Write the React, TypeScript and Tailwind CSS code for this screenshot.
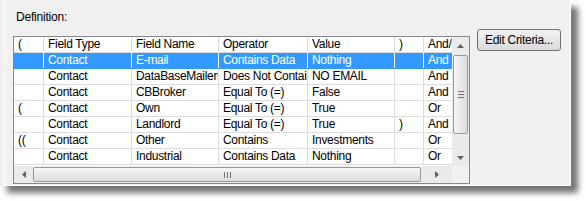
import React from "react"

const FONT = { fontFamily: '"Liberation Sans", Arial, sans-serif' }

// column widths, last one has no right gridline (scrollbar sits beside it)
const COL_W = ["w-[30px]", "w-[88px]", "w-[87px]", "w-[89px]", "w-[87px]", "w-[29px]", "w-[28px]"]

const HEADER = ["(", "Field Type", "Field Name", "Operator", "Value", ")", "And/Or"]

const ROWS: string[][] = [
  ["", "Contact", "E-mail", "Contains Data", "Nothing", "", "And"],
  ["", "Contact", "DataBaseMailerOptOut", "Does Not Contain", "NO EMAIL", "", "And"],
  ["", "Contact", "CBBroker", "Equal To (=)", "False", "", "And"],
  ["(", "Contact", "Own", "Equal To (=)", "True", "", "Or"],
  ["", "Contact", "Landlord", "Equal To (=)", "True", ")", "And"],
  ["((", "Contact", "Other", "Contains", "Investments", "", "Or"],
  ["", "Contact", "Industrial", "Contains Data", "Nothing", "", "Or"],
]

function Arrow({ dir }: { dir: "up" | "down" | "left" | "right" }) {
  const pts = {
    up: "0,4 7,4 3.5,0",
    down: "0,0 7,0 3.5,4",
    left: "4,0 4,7 0,3.5",
    right: "0,0 0,7 4,3.5",
  }[dir]
  const vert = dir === "up" || dir === "down"
  return (
    <svg width={vert ? 7 : 4} height={vert ? 4 : 7} viewBox={vert ? "0 0 7 4" : "0 0 4 7"}>
      <polygon points={pts} fill="#606060" />
    </svg>
  )
}

function Row({ cells, header, selected }: { cells: string[]; header?: boolean; selected?: boolean }) {
  return (
    <div
      className={
        "flex h-[16px] shrink-0 border-b " +
        (selected ? "border-[#3399ff] bg-[#3399ff] text-white" : "border-[#dcdcdc] text-black") +
        (header ? " bg-white" : "")
      }
    >
      {cells.map((c, i) => (
        <div
          key={i}
          className={
            COL_W[i] +
            " shrink-0 overflow-hidden whitespace-nowrap pl-[4px] text-[12px] leading-[15px] tracking-[-0.3px] " +
            (i < cells.length - 1 ? (selected ? "border-r border-white" : "border-r border-[#dcdcdc]") : "")
          }
        >
          {c}
        </div>
      ))}
    </div>
  )
}

function Grid() {
  return (
    <div className="flex w-[457px] flex-col border border-[#828790] bg-white">
      <div className="flex h-[129px]">
        <div className="flex w-[438px] flex-col overflow-hidden">
          <Row cells={HEADER} header />
          {ROWS.map((r, i) => (
            <Row key={i} cells={r} selected={i === 0} />
          ))}
        </div>
        {/* vertical scrollbar */}
        <div className="flex w-[17px] flex-col items-center bg-[#eaeaea]">
          <div className="flex h-[17px] w-full items-center justify-center">
            <Arrow dir="up" />
          </div>
          <div className="mt-[1px] flex h-[79px] w-[15px] items-center justify-center rounded-[2px] border border-[#9a9a9a] bg-gradient-to-r from-[#f6f6f6] to-[#dcdcdc]">
            <div className="flex flex-col gap-[2px]">
              <div className="h-[1px] w-[6px] bg-[#707070]" />
              <div className="h-[1px] w-[6px] bg-[#707070]" />
              <div className="h-[1px] w-[6px] bg-[#707070]" />
            </div>
          </div>
          <div className="flex-1" />
          <div className="flex h-[17px] w-full items-center justify-center">
            <Arrow dir="down" />
          </div>
        </div>
      </div>
      {/* horizontal scrollbar */}
      <div className="flex h-[17px]">
        <div className="flex w-[438px] items-center bg-[#eaeaea]">
          <div className="flex w-[19px] justify-center">
            <Arrow dir="left" />
          </div>
          <div className="flex h-[15px] w-[388px] items-center justify-center rounded-[2px] border border-[#9a9a9a] bg-gradient-to-b from-[#f6f6f6] to-[#dcdcdc]">
            <div className="flex gap-[2px]">
              <div className="h-[6px] w-[1px] bg-[#707070]" />
              <div className="h-[6px] w-[1px] bg-[#707070]" />
              <div className="h-[6px] w-[1px] bg-[#707070]" />
            </div>
          </div>
          <div className="flex flex-1 justify-center">
            <Arrow dir="right" />
          </div>
        </div>
        <div className="w-[17px] bg-[#f0f0f0]" />
      </div>
    </div>
  )
}

export default function App() {
  return (
    <div className="h-[201px] w-[586px] bg-white" style={FONT}>
      <div className="h-[186px] w-[571px] bg-[#f0f0f0] pl-[4px] shadow-[7px_7px_6px_rgba(0,0,0,0.55)]">
        <div className="flex h-full items-start border-r border-b border-l border-white pt-[10px] pl-[8px]">
          <div className="flex flex-col">
            <div className="ml-[3px] h-[15px] text-[12px] leading-[15px] tracking-[-0.2px] text-black">Definition:</div>
            <div className="mt-[11px]">
              <Grid />
            </div>
          </div>
          <div className="ml-[7px] pt-[19px]">
            <button className="flex h-[22px] w-[84px] items-center justify-center rounded-[3px] border border-[#707070] bg-gradient-to-b from-[#f2f2f2] to-[#dadada] text-[12px] tracking-[-0.3px] text-black">
              Edit Criteria...
            </button>
          </div>
        </div>
      </div>
    </div>
  )
}
